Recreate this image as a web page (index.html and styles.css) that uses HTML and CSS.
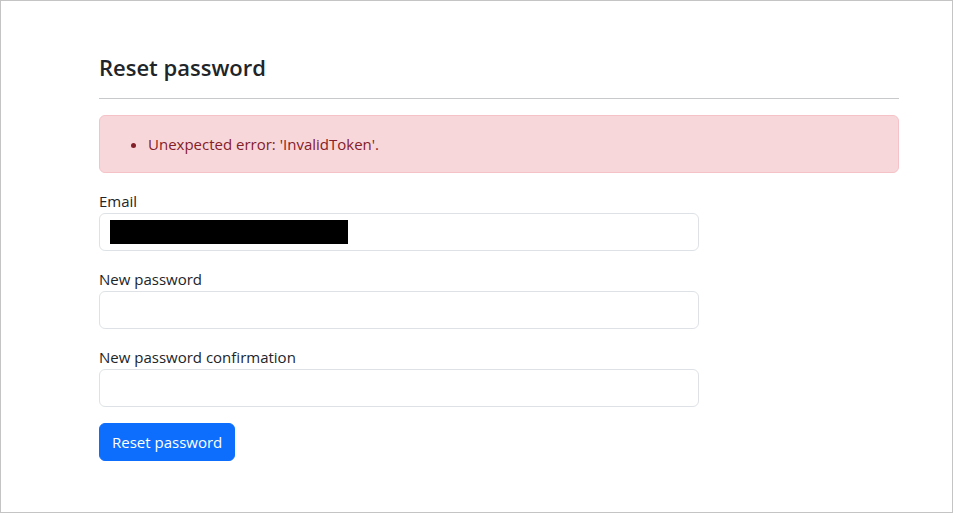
FILE: index.html
```html
<!DOCTYPE html>
<html lang="en">
<head>
<meta charset="utf-8">
<title>Reset password</title>
<link rel="stylesheet" href="styles.css">
</head>
<body>
<div class="frame">
  <main class="container">
    <h4 class="title">Reset password</h4>
    <hr class="rule">
    <div class="alert">
      <ul class="alert-list">
        <li>Unexpected error: 'InvalidToken'.</li>
      </ul>
    </div>
    <form class="form">
      <div class="group">
        <label class="label" for="email">Email</label>
        <div class="input filled" id="email"><span class="redact"></span></div>
      </div>
      <div class="group">
        <label class="label" for="pw">New password</label>
        <input class="input" id="pw" type="password">
      </div>
      <div class="group">
        <label class="label" for="pw2">New password confirmation</label>
        <input class="input" id="pw2" type="password">
      </div>
      <button class="btn" type="button">Reset password</button>
    </form>
  </main>
</div>
</body>
</html>
```
FILE: styles.css
```css
* { box-sizing: border-box; }
html, body { margin: 0; padding: 0; background: #fff; }
body {
  font-family: "Open Sans", "Noto Sans", sans-serif;
  font-size: 15px;
  line-height: 24px;
  color: #212529;
}
.frame {
  height: 513px;
  border: 1px solid #c4c4c4;
  overflow: hidden;
}
.container {
  width: 800px;
  margin-left: 98px;
  padding-top: 52px;
  display: flex;
  flex-direction: column;
}
.title {
  margin: 0;
  font-size: 22px;
  font-weight: 600;
  line-height: 29px;
  height: 29px;
}
.rule {
  margin: 16px 0;
  border: 0;
  border-top: 1px solid #c8c9ca;
  height: 0;
}
.alert {
  background: #f8d7da;
  border: 1px solid #f5c2c7;
  color: #842029;
  border-radius: 6px;
  padding: 16px;
  margin-bottom: 16px;
}
.alert-list {
  margin: 0;
  padding-left: 32px;
}
.form { display: flex; flex-direction: column; }
.group { display: flex; flex-direction: column; margin-bottom: 16px; }
.label { display: block; }
.input {
  display: block;
  width: 600px;
  height: 38px;
  padding: 6px 12px;
  border: 1px solid #dee2e6;
  border-radius: 6px;
  font: inherit;
  background: #fff;
}
.filled { padding: 6px 10px; }
.redact {
  display: block;
  width: 238px;
  height: 24px;
  background: #000;
}
.btn {
  align-self: flex-start;
  font: inherit;
  color: #fff;
  background: #0d6efd;
  border: 1px solid #0d6efd;
  border-radius: 6px;
  padding: 6px 12px;
  height: 38px;
  line-height: 24px;
}
```
